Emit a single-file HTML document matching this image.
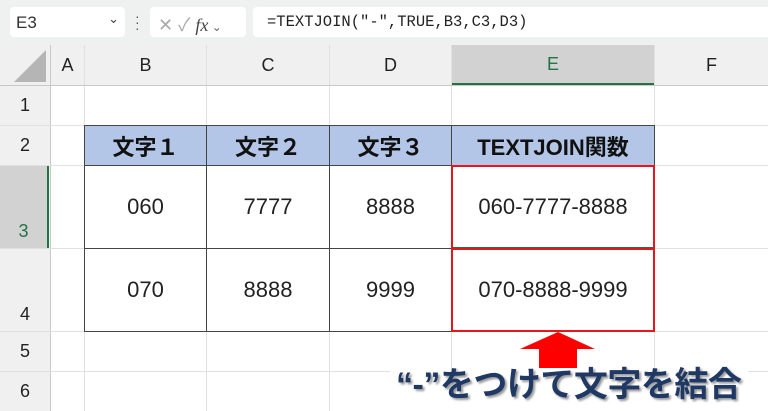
<!DOCTYPE html>
<html><head><meta charset="utf-8"><style>
*{margin:0;padding:0;box-sizing:border-box}
body{width:768px;height:411px;overflow:hidden;background:#fff;position:relative;font-family:"Liberation Sans","Noto Sans CJK JP",sans-serif}
.a{position:absolute}
.hd{background:#f0f0f0;color:#222;font-size:18px;display:flex;align-items:center;justify-content:center}
.vl{position:absolute;width:1px;background:#e1e1e1}
.hl{position:absolute;height:1px;background:#e1e1e1}
.c{position:absolute;display:flex;align-items:center;justify-content:center;font-size:22px;color:#222;border:1px solid #444}
.h{background:#b4c6e7;font-weight:bold;color:#111}
</style></head><body>
<div class="a" style="left:0;top:0;width:768px;height:45px;background:#eef1ef"></div>
<div class="a" style="left:10px;top:7px;width:115px;height:30px;background:#fff;border-radius:4px;font-size:17px;color:#333;padding:6px 0 0 6px">E3<span class="a" style="right:6px;top:4px;font-size:13px;color:#444">⌄</span></div>
<div class="a" style="left:135px;top:13px;color:#555;font-size:14px;line-height:6px">·<br>·<br>·</div>
<div class="a" style="left:150px;top:7px;width:96px;height:30px;background:#fff;border-radius:4px;color:#aaa;font-size:18px;padding:4px 0 0 8px">✕ ✓ <i style="font-family:'Liberation Serif',serif;color:#444">fx</i><span style="font-size:12px;color:#666"> ⌄</span></div>
<div class="a" style="left:253px;top:7px;width:515px;height:30px;background:#fff;border-radius:4px 0 0 4px;font-family:'Liberation Mono',monospace;font-size:15.5px;color:#222;padding:6px 0 0 14px">=TEXTJOIN("-",TRUE,B3,C3,D3)</div>
<div class="a hd" style="left:0;top:45px;width:768px;height:40px"></div>
<div class="a" style="left:14px;top:50px;width:0;height:0;border-left:32px solid transparent;border-bottom:32px solid #b5b5b5"></div>
<div class="a hd" style="left:51px;top:45px;width:33px;height:40px">A</div>
<div class="a hd" style="left:85px;top:45px;width:121px;height:40px">B</div>
<div class="a hd" style="left:207px;top:45px;width:122px;height:40px">C</div>
<div class="a hd" style="left:330px;top:45px;width:121px;height:40px">D</div>
<div class="a hd" style="left:452px;top:45px;width:202px;height:40px;background:#d2d2d2;color:#217346;border-bottom:2px solid #217346">E</div>
<div class="a hd" style="left:655px;top:45px;width:113px;height:40px">F</div>
<div class="a" style="left:0;top:85px;width:50px;height:326px;background:#f0f0f0"></div>
<div class="a hd" style="left:0;top:86px;width:50px;height:39px">1</div>
<div class="a hd" style="left:0;top:126px;width:50px;height:39px">2</div>
<div class="a hd" style="left:0;top:166px;width:49px;height:82px;background:#d2d2d2;color:#217346;align-items:flex-end;padding-bottom:6px;border-right:2px solid #217346">3</div>
<div class="a hd" style="left:0;top:249px;width:50px;height:82px;align-items:flex-end;padding-bottom:6px">4</div>
<div class="a hd" style="left:0;top:332px;width:50px;height:39px">5</div>
<div class="a hd" style="left:0;top:372px;width:50px;height:39px">6</div>
<div class="vl" style="left:50px;top:45px;height:366px;background:#c8c8c8"></div>
<div class="vl" style="left:84px;top:45px;height:366px"></div>
<div class="vl" style="left:206px;top:45px;height:366px"></div>
<div class="vl" style="left:329px;top:45px;height:366px"></div>
<div class="vl" style="left:451px;top:45px;height:366px"></div>
<div class="vl" style="left:654px;top:45px;height:366px"></div>
<div class="hl" style="left:0;top:85px;width:768px;background:#c8c8c8"></div>
<div class="hl" style="left:0;top:125px;width:768px"></div>
<div class="hl" style="left:0;top:165px;width:768px"></div>
<div class="hl" style="left:0;top:248px;width:768px"></div>
<div class="hl" style="left:0;top:331px;width:768px"></div>
<div class="hl" style="left:0;top:371px;width:768px"></div>
<div class="c h" style="left:84px;top:125px;width:123px;height:41px">文字１</div>
<div class="c h" style="left:206px;top:125px;width:124px;height:41px">文字２</div>
<div class="c h" style="left:329px;top:125px;width:123px;height:41px">文字３</div>
<div class="c h" style="left:451px;top:125px;width:204px;height:41px">TEXTJOIN関数</div>
<div class="c" style="left:84px;top:165px;width:123px;height:84px">060</div>
<div class="c" style="left:206px;top:165px;width:124px;height:84px">7777</div>
<div class="c" style="left:329px;top:165px;width:123px;height:84px">8888</div>
<div class="c" style="left:84px;top:248px;width:123px;height:84px">070</div>
<div class="c" style="left:206px;top:248px;width:124px;height:84px">8888</div>
<div class="c" style="left:329px;top:248px;width:123px;height:84px">9999</div>
<div class="c" style="left:451px;top:165px;width:204px;height:84px;border:2px solid #e8161b;border-bottom:2px solid #217346">060-7777-8888</div>
<div class="c" style="left:451px;top:248px;width:204px;height:84px;border:2px solid #e8161b">070-8888-9999</div>
<svg class="a" style="left:0;top:0" width="768" height="411"><polygon points="558,332 595,349 577,349 577,368 539,368 539,349 520,349" fill="#ff0000"/></svg>
<div class="a" style="left:390px;top:370px;width:358px;height:41px;background:#fff"></div>
<div class="a" style="left:396px;top:363px;font-size:34px;line-height:44px;font-weight:bold;color:#1f3864;letter-spacing:-0.5px;white-space:nowrap;text-shadow:2px 2px 2px #999">“-”をつけて文字を結合</div>
</body></html>
